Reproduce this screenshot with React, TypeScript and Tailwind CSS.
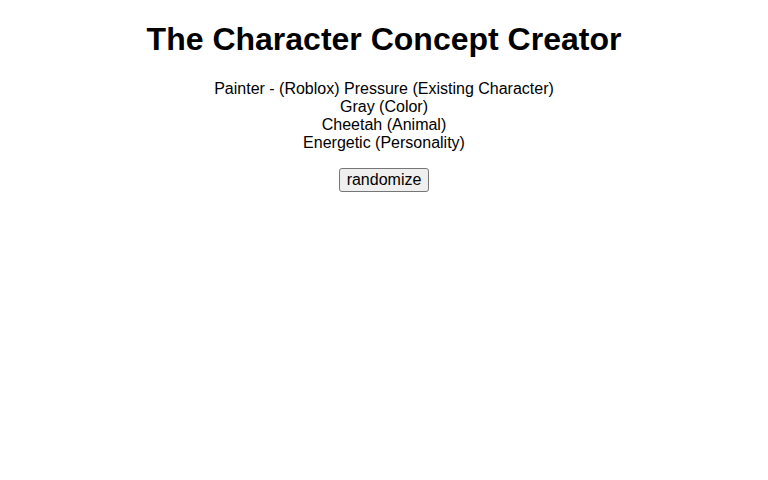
export default function App() {
  return (
    <div className="text-center text-black bg-white min-h-[480px]" style={{ fontFamily: '"Liberation Sans", Arial, sans-serif' }}>
      <h1 className="text-[32px] leading-[37px] font-bold pt-[21px] mb-[22px]">The Character Concept Creator</h1>
      <div className="text-[16px] leading-[18px]">
        <div>Painter - (Roblox) Pressure (Existing Character)</div>
        <div>Gray (Color)</div>
        <div>Cheetah (Animal)</div>
        <div>Energetic (Personality)</div>
      </div>
      <div className="mt-4">
        <button className="text-[16px] leading-[18px] px-[7px] py-[2px] border border-[#767676] rounded-[3px] bg-[#efefef] text-black">
          randomize
        </button>
      </div>
    </div>
  );
}
